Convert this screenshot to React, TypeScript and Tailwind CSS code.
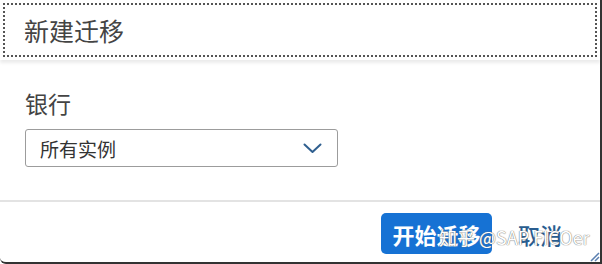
import React from 'react';

const font = { fontFamily: '"Noto Sans CJK SC", "Noto Sans", sans-serif' };

export default function App() {
  return (
    <div style={font} className="relative w-[602px] h-[264px] bg-white overflow-hidden border-r-2 border-b-2 border-[#333] rounded-bl-[6px]">
      <div className="pt-[3px] px-[3px] shadow-[0_3px_3px_rgba(0,0,0,0.08)] pb-[3px]">
        <div className="h-[54px] border-2 border-dotted border-[#555] flex items-center pl-[19px]">
          <span className="text-[25px] leading-none text-[#444]">新建迁移</span>
        </div>
      </div>

      <div className="px-[25px] pt-[32px] h-[140px]">
        <div className="text-[23px] leading-none text-[#444]">银行</div>
        <div className="mt-[14px] w-[313px] h-[38px] border border-[#9c9c9c] rounded-[3px] flex items-center justify-between pl-[14px] pr-[15px]">
          <span className="text-[19px] leading-none text-[#333]">所有实例</span>
          <svg width="19" height="11" viewBox="0 0 19 11" fill="none">
            <path d="M1.5 1.5 L9.5 9 L17.5 1.5" stroke="#2f5f8f" strokeWidth="2" strokeLinecap="round" strokeLinejoin="round" />
          </svg>
        </div>
      </div>

      <div className="h-[2px] bg-[#e3e3e3]" />

      <div className="flex justify-end items-center pt-[11px] pr-[38px] gap-[26px]">
        <button className="w-[111px] h-[41px] rounded-[5px] bg-[#1672d4] text-white text-[22px] font-bold leading-none">开始迁移</button>
        <span className="text-[22px] leading-none text-[#2a5d8f] font-medium">取消</span>
      </div>

      <div className="absolute left-[439px] top-[228px] whitespace-nowrap text-[18px] leading-none text-white [text-shadow:0_0_1px_#777,0_0_1px_#777]">知乎 @SAP FICOer</div>

      <svg className="absolute right-0 bottom-0" width="12" height="12" viewBox="0 0 12 12">
        <path d="M11 3 L3 11 M11 7 L7 11" stroke="#5a7fb0" strokeWidth="1.5" />
      </svg>
    </div>
  );
}
